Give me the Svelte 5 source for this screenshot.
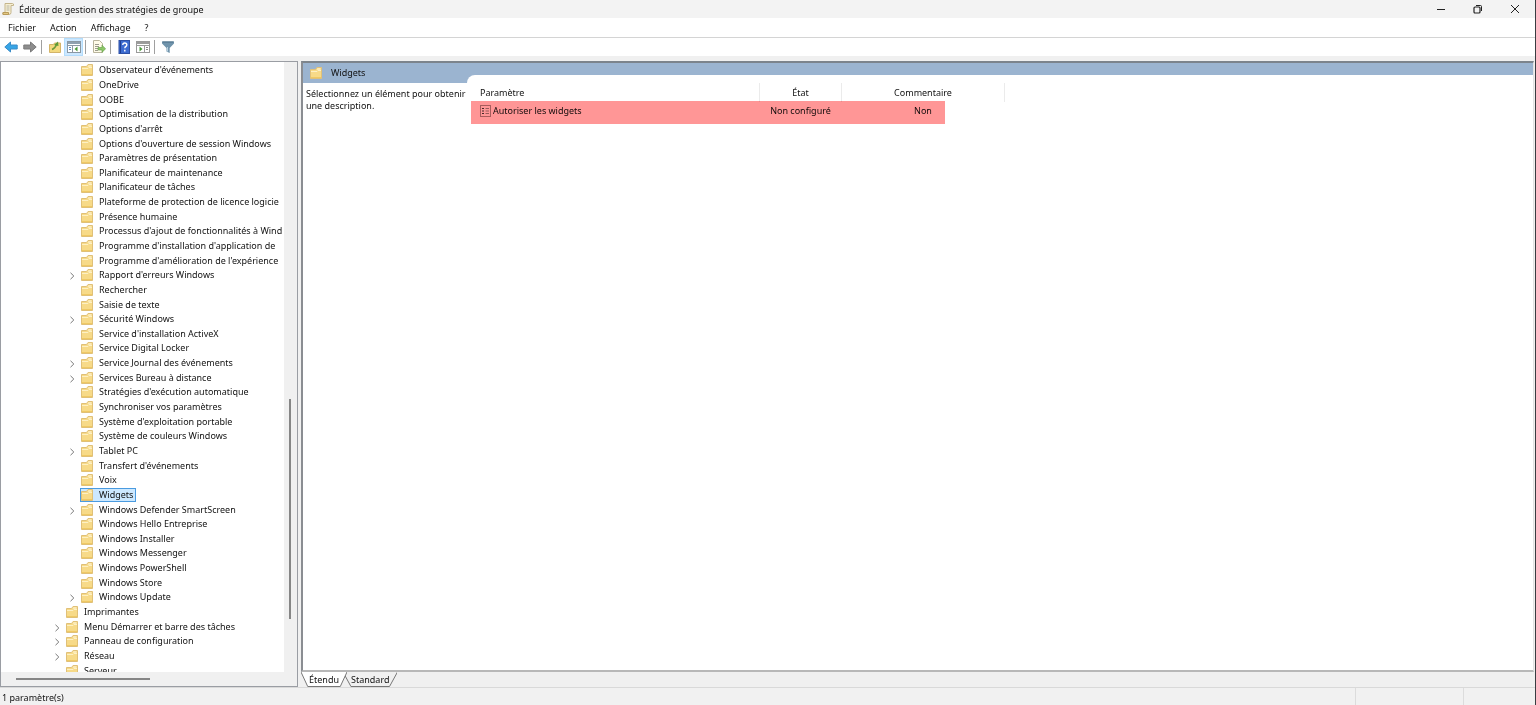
<script>
	const branch = [
		{ label: "Observateur d'événements" },
		{ label: 'OneDrive' },
		{ label: 'OOBE' },
		{ label: 'Optimisation de la distribution' },
		{ label: "Options d'arrêt" },
		{ label: "Options d'ouverture de session Windows" },
		{ label: 'Paramètres de présentation' },
		{ label: 'Planificateur de maintenance' },
		{ label: 'Planificateur de tâches' },
		{ label: 'Plateforme de protection de licence logicie' },
		{ label: 'Présence humaine' },
		{ label: "Processus d'ajout de fonctionnalités à Wind" },
		{ label: "Programme d'installation d'application de" },
		{ label: "Programme d'amélioration de l'expérience" },
		{ label: "Rapport d'erreurs Windows", children: true },
		{ label: 'Rechercher' },
		{ label: 'Saisie de texte' },
		{ label: 'Sécurité Windows', children: true },
		{ label: "Service d'installation ActiveX" },
		{ label: 'Service Digital Locker' },
		{ label: 'Service Journal des événements', children: true },
		{ label: 'Services Bureau à distance', children: true },
		{ label: "Stratégies d'exécution automatique" },
		{ label: 'Synchroniser vos paramètres' },
		{ label: "Système d'exploitation portable" },
		{ label: 'Système de couleurs Windows' },
		{ label: 'Tablet PC', children: true },
		{ label: "Transfert d'événements" },
		{ label: 'Voix' },
		{ label: 'Widgets' },
		{ label: 'Windows Defender SmartScreen', children: true },
		{ label: 'Windows Hello Entreprise' },
		{ label: 'Windows Installer' },
		{ label: 'Windows Messenger' },
		{ label: 'Windows PowerShell' },
		{ label: 'Windows Store' },
		{ label: 'Windows Update', children: true },
		{ label: 'Imprimantes', top: true },
		{ label: 'Menu Démarrer et barre des tâches', top: true, children: true },
		{ label: 'Panneau de configuration', top: true, children: true },
		{ label: 'Réseau', top: true, children: true },
		{ label: 'Serveur', top: true }
	]

	const menus = ['Fichier', 'Action', 'Affichage', '?']

	let selected = $state('Widgets')
	let tab = $state('Étendu')
</script>

{#snippet folder()}
	<svg width="12" height="12" viewBox="0 0 12 12" aria-hidden="true">
		<path d="M.5 2.500h5l1.500-2h4.500v11H.5z" fill="#f7da88" stroke="#e0c078" />
		<path d="M7.500 1.500h3v1H6.800z" fill="#fff8e0" />
		<path d="M1 4.500h6l1-1h3" fill="none" stroke="#fdf0c4" />
		<path d="M1 10.500h10" stroke="#efc964" />
	</svg>
{/snippet}

<div class="window">
	<header class="title-bar">
		<svg width="14" height="14" viewBox="0 0 14 14" aria-hidden="true">
			<path d="M4 1.500h7.500q1.500 0 1 2H10v7q0 2-2 2H2q-1-1 0-2h2z" fill="#f7efd2" stroke="#c4b58c" />
			<path d="M2 10.500h5.500v2H2z" fill="#e3c983" stroke="#b99b5a" />
			<path d="M5.500 4h3M5.500 6h3M5.500 8h3" stroke="#b3b3a6" />
		</svg>
		<h1>Éditeur de gestion des stratégies de groupe</h1>
		<div class="window-buttons">
			<button aria-label="Réduire">
				<svg width="10" height="10" viewBox="0 0 10 10"><path d="M1 5.500h8" stroke="#222" /></svg>
			</button>
			<button aria-label="Restaurer">
				<svg width="10" height="10" viewBox="0 0 10 10">
					<path d="M3 1.500h4.500q1 0 1 1V7" fill="none" stroke="#222" />
					<rect x="1" y="3" width="6" height="6" rx="1" fill="none" stroke="#222" stroke-width="1.200" />
				</svg>
			</button>
			<button aria-label="Fermer">
				<svg width="10" height="10" viewBox="0 0 10 10"><path d="M1 1l8 8M9 1L1 9" stroke="#222" /></svg>
			</button>
		</div>
	</header>

	<nav class="menu-bar">
		{#each menus as menu (menu)}
			<button>{menu}</button>
		{/each}
	</nav>

	<div class="toolbar">
		<button aria-label="Précédent">
			<svg width="14" height="12" viewBox="0 0 14 12">
				<path d="M.8 6L6.500 1v3h6.700v4H6.500v3z" fill="#37a5e6" stroke="#3a8cc8" />
			</svg>
		</button>
		<button aria-label="Suivant">
			<svg width="14" height="12" viewBox="0 0 14 12">
				<path d="M13.200 6L7.500 1v3H.8v4h6.700v3z" fill="#8d8d8d" stroke="#7a7a7a" />
			</svg>
		</button>
		<span class="separator"></span>
		<button aria-label="Dossier parent">
			<svg width="14" height="14" viewBox="0 0 14 14">
				<path d="M1.500 4.500h4l1-1.500h6v9.500h-11z" fill="#f3d97f" stroke="#d3b469" />
				<path d="M4 9.500q3-1 4.500-5" fill="none" stroke="#6a9a3a" stroke-width="1.500" />
				<path d="M6 5l4-3.500.5 4.500z" fill="#5d9b35" />
			</svg>
		</button>
		<button class="pressed" aria-label="Afficher l'arborescence" aria-pressed="true">
			<svg width="14" height="14" viewBox="0 0 14 14">
				<rect x=".5" y="1.500" width="13" height="11" fill="#fff" stroke="#8b98a3" />
				<path d="M1 3h12" stroke="#8fa1b0" stroke-width="2" />
				<path d="M1 5.500h12M5.500 5v7" stroke="#8b98a3" />
				<path d="M2 7.500h2M2 9.500h2" stroke="#5f8ec2" />
				<path d="M10.500 6.500v5l-3-2.500z" fill="#4a9a3a" />
			</svg>
		</button>
		<span class="separator"></span>
		<button aria-label="Exporter la liste">
			<svg width="14" height="14" viewBox="0 0 14 14">
				<path d="M1.500.5h6l3 3v9h-9z" fill="#fffbe8" stroke="#b9b49c" />
				<path d="M3 4.500h4M3 6.500h4M3 8.500h3M3 10.500h3" stroke="#9b9b8e" />
				<path d="M6 7.500h4V5.200l3.600 3.600-3.600 3.600v-2.400H6z" fill="#8cc768" stroke="#5f9b45" stroke-width=".6" />
			</svg>
		</button>
		<span class="separator"></span>
		<button aria-label="Aide">
			<svg width="14" height="14" viewBox="0 0 14 14">
				<rect x="2" y=".5" width="10.500" height="13" fill="#3c6bd0" stroke="#2c4fa3" />
				<path d="M3.500 1v12" stroke="#1f3f93" />
				<path d="M5.800 5q0-2 2-2t2 1.800q0 1.200-1 1.700t-1 1.700M7.800 9.800v1.600" fill="none" stroke="#fff" stroke-width="1.400" />
			</svg>
		</button>
		<button aria-label="Afficher le volet Actions">
			<svg width="14" height="14" viewBox="0 0 14 14">
				<rect x=".5" y="1.500" width="13" height="11" fill="#fff" stroke="#9a9a9a" />
				<path d="M1 3h12" stroke="#9c9c9c" stroke-width="2" />
				<path d="M1 5.500h12M8.500 5v7" stroke="#9a9a9a" />
				<path d="M10 7.500h2M10 9.500h2" stroke="#8a8a8a" />
				<path d="M3.500 6.500v5l3-2.500z" fill="#4a9a3a" />
			</svg>
		</button>
		<span class="separator"></span>
		<button aria-label="Filtrer">
			<svg width="14" height="14" viewBox="0 0 14 14">
				<path d="M1 1.500h12v2L8.700 8v5l-3.200-1.500V8L1 3.500z" fill="#6f93ab" />
				<path d="M1.500 2h11" stroke="#4d6f87" />
				<path d="M6.500 7v4.500" stroke="#b8d0df" />
			</svg>
		</button>
	</div>

	<main>
		<section class="tree-pane">
			<div class="tree-row">
				<div class="tree-view">
					<ul class="tree">
						{#each branch as node (node.label)}
							<li class:top={node.top}>
								<span class="toggle">
									{#if node.children}
										<svg width="6" height="8" viewBox="0 0 6 8" aria-hidden="true">
											<path d="M1.500 .8L4.800 4 1.500 7.200" fill="none" stroke="#777" />
										</svg>
									{/if}
								</span>
								<button
									class="node"
									class:selected={selected === node.label}
									onclick={() => (selected = node.label)}
								>
									{@render folder()}
									{node.label}
								</button>
							</li>
						{/each}
					</ul>
				</div>
				<div class="scroll-y"><span></span></div>
			</div>
			<div class="scroll-x"><span></span></div>
		</section>

		<section class="result-pane">
			<div class="result-frame">
				<div class="result-header">
					{@render folder()}
					<h2>{selected}</h2>
				</div>
				<div class="result-body">
					<p class="description">Sélectionnez un élément pour obtenir une description.</p>
					<div class="list">
						<table>
							<thead>
								<tr>
									<th class="setting">Paramètre</th>
									<th class="state">État</th>
									<th class="comment">Commentaire</th>
								</tr>
							</thead>
							<tbody>
								<tr>
									<td class="setting">
										<span class="policy">
											<svg width="11" height="12" viewBox="0 0 11 12" aria-hidden="true">
												<rect x=".5" y=".5" width="10" height="11" fill="#fff" stroke="#a89c9c" />
												<path d="M2 3.500h2M2 6h2M2 8.500h2" stroke="#444" />
												<path d="M5.500 3.500H9M5.500 6H9M5.500 8.500H9" stroke="#999" />
											</svg>
											Autoriser les widgets
										</span>
									</td>
									<td>Non configuré</td>
									<td>Non</td>
								</tr>
							</tbody>
						</table>
						<div class="highlight"></div>
					</div>
				</div>
			</div>
			<div class="tabs">
				{#each ['Étendu', 'Standard'] as name (name)}
					<button class:active={tab === name} onclick={() => (tab = name)}>
						<svg viewBox="0 0 48 15" preserveAspectRatio="none" aria-hidden="true">
							<path d="M0 0L7 14.500H41L48 0" vector-effect="non-scaling-stroke" />
						</svg>
						<span>{name}</span>
					</button>
				{/each}
			</div>
		</section>
	</main>

	<footer class="status-bar">
		<span class="status">1 paramètre(s)</span>
		<span class="cell"></span>
		<span class="cell small"></span>
	</footer>
</div>

<style>
	:global(body) {
		margin: 0;
	}

	.window {
		display: flex;
		flex-direction: column;
		height: 100vh;
		box-sizing: border-box;
		border-right: 1px solid #3a3d42;
		background: #f0f0f0;
		color: #111;
		font-family: 'Noto Sans', 'Open Sans', sans-serif;
		font-size: 9px;
		line-height: 12px;
		overflow: hidden;
	}

	button {
		padding: 0;
		border: none;
		background: none;
		color: inherit;
		font: inherit;
	}

	svg {
		display: block;
		flex: none;
	}

	h1,
	h2,
	p,
	ul {
		margin: 0;
		padding: 0;
		font-size: inherit;
		font-weight: normal;
	}

	.title-bar {
		display: flex;
		align-items: center;
		gap: 4px;
		height: 18px;
		padding-left: 1px;
		background: #f3f3f3;
	}

	h1 {
		padding-top: 2px;
	}

	.window-buttons {
		display: flex;
		margin: 0 2px 0 auto;
	}

	.window-buttons button {
		display: flex;
		align-items: center;
		justify-content: center;
		width: 37px;
		height: 16px;
	}

	.menu-bar {
		display: flex;
		gap: 14px;
		height: 19px;
		padding-left: 8px;
		border-bottom: 1px solid #d4d4d4;
		background: #fff;
	}

	.toolbar {
		display: flex;
		align-items: center;
		height: 18px;
		padding-left: 1px;
		background: #fff;
	}

	.toolbar button {
		display: flex;
		align-items: center;
		justify-content: center;
		width: 19px;
		height: 18px;
	}

	.toolbar .pressed {
		background: #cce8ff;
		box-shadow: inset 0 0 0 1px #b3dcfb;
	}

	.separator {
		width: 1px;
		height: 14px;
		margin: 0 3px 0 2px;
		background: #a0a0a0;
	}

	main {
		display: flex;
		flex: 1;
		gap: 3px;
		min-height: 0;
		padding: 5px 1px 0 0;
	}

	.tree-pane {
		display: flex;
		flex-direction: column;
		flex: none;
		width: 298px;
		box-sizing: border-box;
		border: 1px solid #9a9da3;
	}

	.tree-row {
		display: flex;
		flex: 1;
		min-height: 0;
	}

	.tree-view {
		flex: 1;
		min-width: 0;
		background: #fff;
		overflow: hidden;
	}

	/* rows share the height, the last one runs under the scrollbar */
	.tree {
		display: flex;
		flex-direction: column;
		height: calc(100% + 5px);
		padding-top: 1px;
		list-style: none;
	}

	.tree li {
		display: flex;
		align-items: center;
		flex: 1;
		min-height: 0;
		padding-left: 66px;
		white-space: nowrap;
	}

	.tree li.top {
		padding-left: 51px;
	}

	.toggle {
		flex: none;
		width: 13px;
		padding-top: 2px;
	}

	.toggle svg {
		margin-left: 2px;
	}

	.node {
		display: flex;
		align-items: center;
		gap: 6px;
		height: 100%;
		padding: 0 3px 0 1px;
		white-space: nowrap;
	}

	.node.selected {
		background: #cce8ff;
		box-shadow: inset 0 0 0 1px #4a9be0;
	}

	.scroll-y {
		width: 13px;
		box-sizing: border-box;
		padding-left: 5px;
		background: #f0f0f0;
	}

	.scroll-y span {
		display: block;
		width: 2px;
		height: 36%;
		margin-top: 337px;
		background: #868686;
	}

	.scroll-x {
		height: 14px;
		box-sizing: border-box;
		padding: 6px 0 0 15px;
	}

	.scroll-x span {
		display: block;
		width: 134px;
		height: 2px;
		background: #868686;
	}

	.result-pane {
		display: flex;
		flex-direction: column;
		flex: 1;
		min-width: 0;
	}

	.result-frame {
		display: flex;
		flex-direction: column;
		flex: 1;
		min-height: 0;
		border-style: solid;
		border-width: 2px 1px 2px 2px;
		border-color: #7c848c #e3e3e3 #b8b8b8 #8a8d92;
		background: #fff;
	}

	.result-header {
		display: flex;
		align-items: center;
		gap: 9px;
		height: 20px;
		padding-left: 7px;
		background: #9bb4d0;
	}

	.result-body {
		display: flex;
		flex: 1;
	}

	.description {
		flex: none;
		width: 164px;
		padding: 5px 0 0 3px;
		box-sizing: border-box;
	}

	.list {
		position: relative;
		flex: 1;
		margin-top: -8px;
		padding: 8px 0 0 4px;
		border-top-left-radius: 8px;
		background: #fff;
	}

	table {
		table-layout: fixed;
		width: 534px;
		border-collapse: collapse;
		text-align: center;
	}

	th {
		height: 19px;
		padding: 0;
		border-right: 1px solid #ebebeb;
		box-sizing: border-box;
		font-weight: normal;
	}

	td {
		height: 18px;
		padding: 0;
	}

	.setting {
		padding-left: 9px;
		text-align: left;
	}

	.state {
		width: 82px;
	}

	.comment {
		width: 163px;
	}

	.policy {
		display: flex;
		align-items: center;
		gap: 2px;
	}

	.highlight {
		position: absolute;
		top: 26px;
		left: 4px;
		width: 474px;
		height: 23px;
		background: #ff9696;
		mix-blend-mode: multiply;
	}

	.tabs {
		display: flex;
		height: 15px;
	}

	.tabs button {
		position: relative;
		margin-right: -4px;
		padding: 0 8px;
	}

	.tabs svg {
		position: absolute;
		inset: 0;
		width: 100%;
		height: 100%;
		fill: #f0f0f0;
		stroke: #777;
	}

	.tabs .active {
		z-index: 1;
	}

	.tabs .active svg {
		fill: #fff;
	}

	.tabs span {
		position: relative;
	}

	.status-bar {
		display: flex;
		align-items: center;
		height: 17px;
		border-top: 1px solid #d9d9d9;
		background: #f1f1f1;
	}

	.status {
		flex: 1;
		padding: 2px 0 0 2px;
	}

	.cell {
		width: 107px;
		height: 100%;
		border-left: 1px solid #dcdcdc;
	}

	.cell.small {
		width: 71px;
	}
</style>
